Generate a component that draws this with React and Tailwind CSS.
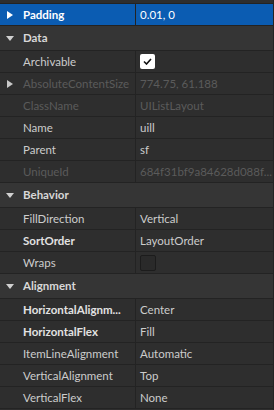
const sections = [
  {
    rows: [{ label: "Padding", value: "0.01, 0", bold: true, selected: true, arrow: "right" }],
  },
  {
    title: "Data",
    rows: [
      { label: "Archivable", check: true },
      { label: "AbsoluteContentSize", value: "774.75, 61.188", disabled: true, arrow: "right" },
      { label: "ClassName", value: "UIListLayout", disabled: true },
      { label: "Name", value: "uill" },
      { label: "Parent", value: "sf" },
      { label: "UniqueId", value: "684f31bf9a84628d088f...", disabled: true },
    ],
  },
  {
    title: "Behavior",
    rows: [
      { label: "FillDirection", value: "Vertical" },
      { label: "SortOrder", value: "LayoutOrder", bold: true },
      { label: "Wraps", check: false },
    ],
  },
  {
    title: "Alignment",
    rows: [
      { label: "HorizontalAlignm...", value: "Center", bold: true },
      { label: "HorizontalFlex", value: "Fill", bold: true },
      { label: "ItemLineAlignment", value: "Automatic" },
      { label: "VerticalAlignment", value: "Top" },
      { label: "VerticalFlex", value: "None" },
    ],
  },
];

const ArrowRight = ({ color }) => (
  <svg width="6" height="8" viewBox="0 0 6 8" className="shrink-0">
    <path d="M0 0 L6 4 L0 8 Z" fill={color} />
  </svg>
);

const ArrowDown = () => (
  <svg width="8" height="5" viewBox="0 0 8 5" className="shrink-0">
    <path d="M0 0 L8 0 L4 5 Z" fill="#d0d0d0" />
  </svg>
);

const Checkbox = ({ checked }) =>
  checked ? (
    <div className="w-[15px] h-[15px] rounded-[2px] bg-white flex items-center justify-center">
      <svg width="9" height="7" viewBox="0 0 9 7">
        <path d="M1 3.5 L3.5 6 L8 1" stroke="#111" strokeWidth="1.6" fill="none" />
      </svg>
    </div>
  ) : (
    <div className="w-[16px] h-[16px] rounded-[2px] bg-[#2a2a2a] border border-[#1c1c1c]" />
  );

const Row = ({ row }) => {
  const textColor = row.disabled ? "text-[#5b5b5b]" : row.selected ? "text-white" : "text-[#cccccc]";
  return (
    <div
      className={`flex h-[22px] border-b border-[#232323] ${row.selected ? "bg-[#0b5cb2]" : "bg-[#2e2e2e]"}`}
    >
      <div className="w-[136px] shrink-0 flex items-center border-r border-[#232323]">
        <div className="w-[23px] shrink-0 flex items-center pl-[7px]">
          {row.arrow && <ArrowRight color={row.selected ? "#ffffff" : "#c8c8c8"} />}
        </div>
        <span
          className={`whitespace-nowrap ${row.bold ? "font-bold" : ""} ${
            row.selected ? "text-white" : row.disabled ? "text-[#5b5b5b]" : row.bold ? "text-[#e2e2e2]" : "text-[#cccccc]"
          }`}
        >
          {row.label}
        </span>
      </div>
      <div className="flex-1 min-w-0 flex items-center pl-[4px]">
        {row.check !== undefined ? (
          <Checkbox checked={row.check} />
        ) : (
          <span className={`whitespace-nowrap ${textColor}`}>{row.value}</span>
        )}
      </div>
    </div>
  );
};

export default function App() {
  return (
    <div
      className="w-[274px] h-[410px] overflow-hidden bg-[#2e2e2e] border-r border-[#232323] text-[11.5px] leading-[16px]"
      style={{ fontFamily: "Lato, 'Noto Sans', sans-serif" }}
    >
      <div className="h-[4px] bg-[#2e2e2e] border-b border-[#232323]" />
      {sections.map((s, i) => (
        <div key={i}>
          {s.title && (
            <div className="flex items-center h-[25px] bg-[#353535] border-b border-[#232323]">
              <div className="w-[23px] flex items-center pl-[6px]">
                <ArrowDown />
              </div>
              <span className="font-bold text-[#d8d8d8]">{s.title}</span>
            </div>
          )}
          {s.rows.map((r) => (
            <Row key={r.label} row={r} />
          ))}
        </div>
      ))}
    </div>
  );
}
